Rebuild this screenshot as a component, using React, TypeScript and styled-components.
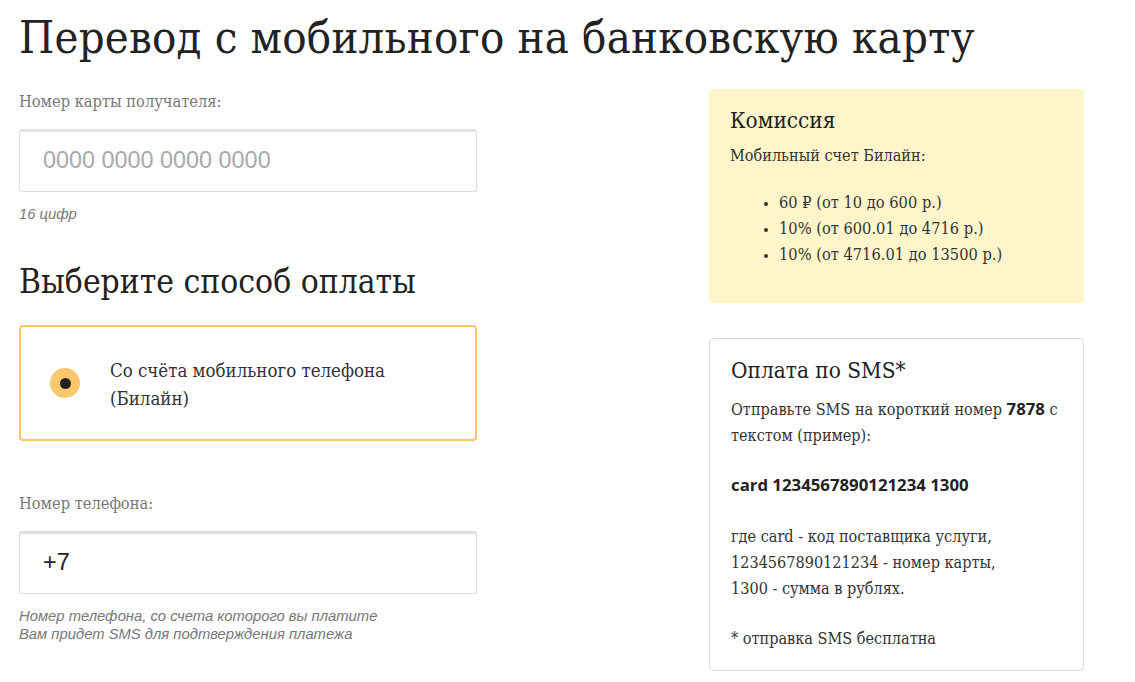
import React from "react";
import styled, { createGlobalStyle } from "styled-components";

const Global = createGlobalStyle`
  html, body { margin: 0; padding: 0; background: #fff; }
  body { font-family: "DejaVu Serif Condensed", "DejaVu Serif", serif; color: #333; }
  * { box-sizing: border-box; }
`;

const serif = `"DejaVu Serif Condensed", "DejaVu Serif", serif`;
const sans = `"Liberation Sans", Arial, sans-serif`;
const boldSans = `"Open Sans", "Liberation Sans", Arial, sans-serif`;

const Page = styled.div`
  padding: 0 0 0 19px;
  width: 1135px;
`;

const Title = styled.h1`
  margin: 0;
  padding-top: 8px;
  font-family: ${serif};
  font-weight: normal;
  font-size: 45px;
  line-height: 60px;
  color: #222;
  letter-spacing: 0.2px;
`;

const Columns = styled.div`
  display: flex;
  gap: 232px;
  margin-top: 21px;
  align-items: flex-start;
`;

const Left = styled.div`
  width: 458px;
  display: flex;
  flex-direction: column;
`;

const Right = styled.div`
  width: 375px;
  display: flex;
  flex-direction: column;
  gap: 35px;
`;

const Label = styled.div<{ $top?: number }>`
  font-family: ${serif};
  font-size: 16.3px;
  line-height: 20px;
  color: #777;
  margin-top: ${(p) => p.$top ?? 0}px;
`;

const Input = styled.div<{ $filled?: boolean }>`
  margin-top: 17px;
  height: 63px;
  border: 1px solid #ddd;
  border-top: 3px solid #e0e0e0;
  border-radius: 3px;
  display: flex;
  align-items: center;
  padding: 0 0 3px 23px;
  font-family: ${sans};
  font-size: 23.4px;
  color: ${(p) => (p.$filled ? "#222" : "#a9a9a9")};
`;

const Hint = styled.div`
  margin-top: 13px;
  font-family: ${sans};
  font-style: italic;
  font-size: 14.8px;
  line-height: 18px;
  color: #777;
`;

const SubTitle = styled.h2`
  margin: 37px 0 0;
  font-family: ${serif};
  font-weight: normal;
  font-size: 33.3px;
  line-height: 44px;
  color: #222;
`;

const RadioCard = styled.div`
  margin-top: 21px;
  height: 116px;
  border: 2px solid #f7c66b;
  border-radius: 4px;
  display: flex;
  align-items: center;
  padding: 0 0 0 29px;
  gap: 30px;
`;

const RadioDot = styled.span`
  width: 30px;
  height: 30px;
  border-radius: 50%;
  background: #fac76d;
  display: flex;
  align-items: center;
  justify-content: center;
  flex: none;
  &::after {
    content: "";
    width: 11px;
    height: 11px;
    border-radius: 50%;
    background: #222;
  }
`;

const RadioText = styled.div`
  font-family: ${serif};
  font-size: 18.5px;
  line-height: 28px;
  color: #333;
  padding-top: 4px;
`;

const CommissionBox = styled.div`
  background: #fef6ca;
  border-radius: 4px;
  padding: 14px 20px 26px 21px;
  height: 214px;
`;

const SmsBox = styled.div`
  border: 1px solid #ddd;
  border-radius: 4px;
  padding: 14px 20px 16px 21px;
  height: 333px;
`;

const BoxTitle = styled.h3`
  margin: 0;
  font-family: ${serif};
  font-weight: normal;
  font-size: 22.4px;
  line-height: 34px;
  color: #222;
`;

const Text = styled.p<{ $top?: number }>`
  margin: ${(p) => p.$top ?? 0}px 0 0;
  font-family: ${serif};
  font-size: 16.1px;
  line-height: 26px;
  color: #333;
`;

const Bold = styled.b`
  font-family: ${boldSans};
  font-weight: bold;
  font-size: 16.8px;
  color: #222;
`;

const List = styled.ul`
  margin: 21px 0 0;
  padding-left: 49px;
  font-family: ${serif};
  font-size: 16.3px;
  line-height: 26px;
  color: #333;
  li::marker { font-size: 13px; }
`;

export default function App() {
  return (
    <>
      <Global />
      <Page>
        <Title>Перевод с мобильного на банковскую карту</Title>
        <Columns>
          <Left>
            <Label $top={3}>Номер карты получателя:</Label>
            <Input>0000 0000 0000 0000</Input>
            <Hint>16 цифр</Hint>
            <SubTitle>Выберите способ оплаты</SubTitle>
            <RadioCard>
              <RadioDot />
              <RadioText>
                Со счёта мобильного телефона
                <br />
                (Билайн)
              </RadioText>
            </RadioCard>
            <Label $top={53}>Номер телефона:</Label>
            <Input $filled>+7</Input>
            <Hint>
              Номер телефона, со счета которого вы платите
              <br />
              Вам придет SMS для подтверждения платежа
            </Hint>
          </Left>
          <Right>
            <CommissionBox>
              <BoxTitle>Комиссия</BoxTitle>
              <Text $top={6}>Мобильный счет Билайн:</Text>
              <List>
                <li>60 ₽ (от 10 до 600 р.)</li>
                <li>10% (от 600.01 до 4716 р.)</li>
                <li>10% (от 4716.01 до 13500 р.)</li>
              </List>
            </CommissionBox>
            <SmsBox>
              <BoxTitle>Оплата по SMS*</BoxTitle>
              <Text $top={9}>
                Отправьте SMS на короткий номер <Bold>7878</Bold> с текстом
                (пример):
              </Text>
              <Text $top={23}>
                <Bold>card 1234567890121234 1300</Bold>
              </Text>
              <Text $top={25}>
                где card - код поставщика услуги,
                <br />
                1234567890121234 - номер карты,
                <br />
                1300 - сумма в рублях.
              </Text>
              <Text $top={24}>* отправка SMS бесплатна</Text>
            </SmsBox>
          </Right>
        </Columns>
      </Page>
    </>
  );
}
